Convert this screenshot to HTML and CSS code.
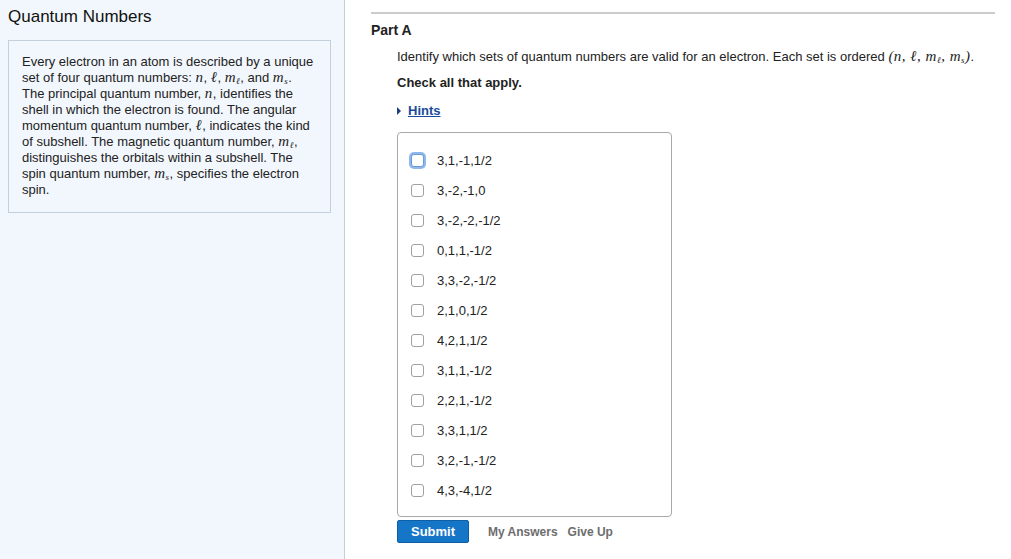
FILE: index.html
```html
<!DOCTYPE html>
<html>
<head>
<meta charset="utf-8">
<link rel="stylesheet" href="styles.css">
</head>
<body>
<div class="page">
  <aside class="side">
    <h1 class="title">Quantum Numbers</h1>
    <div class="intro">
      Every electron in an atom is described by a unique set of four quantum numbers: <span class="m">n</span>, <span class="m">ℓ</span>, <span class="m">m<sub>ℓ</sub></span>, and <span class="m">m<sub class="up">s</sub></span>. The principal quantum number, <span class="m">n</span>, identifies the shell in which the electron is found. The angular momentum quantum number, <span class="m">ℓ</span>, indicates the kind of subshell. The magnetic quantum number, <span class="m">m<sub>ℓ</sub></span>, distinguishes the orbitals within a subshell. The spin quantum number, <span class="m">m<sub class="up">s</sub></span>, specifies the electron spin.
    </div>
  </aside>
  <main class="main">
    <div class="part">
      <h2 class="part-title">Part A</h2>
      <div class="part-body">
        <p class="question">Identify which sets of quantum numbers are valid for an electron. Each set is ordered <span class="m">(n, ℓ, m<sub>ℓ</sub>, m<sub>s</sub>)</span>.</p>
        <p class="apply">Check all that apply.</p>
        <p class="hints"><span class="tri"></span><a href="#" class="hint-link">Hints</a></p>
        <div class="choices">
          <label class="choice"><span class="box focus"></span>3,1,-1,1/2</label>
          <label class="choice"><span class="box"></span>3,-2,-1,0</label>
          <label class="choice"><span class="box"></span>3,-2,-2,-1/2</label>
          <label class="choice"><span class="box"></span>0,1,1,-1/2</label>
          <label class="choice"><span class="box"></span>3,3,-2,-1/2</label>
          <label class="choice"><span class="box"></span>2,1,0,1/2</label>
          <label class="choice"><span class="box"></span>4,2,1,1/2</label>
          <label class="choice"><span class="box"></span>3,1,1,-1/2</label>
          <label class="choice"><span class="box"></span>2,2,1,-1/2</label>
          <label class="choice"><span class="box"></span>3,3,1,1/2</label>
          <label class="choice"><span class="box"></span>3,2,-1,-1/2</label>
          <label class="choice"><span class="box"></span>4,3,-4,1/2</label>
        </div>
        <div class="actions">
          <button class="submit">Submit</button>
          <a href="#" class="action">My Answers</a>
          <a href="#" class="action">Give Up</a>
        </div>
      </div>
    </div>
  </main>
</div>
</body>
</html>
```

FILE: styles.css
```css
html, body {
  margin: 0;
  padding: 0;
  height: 100%;
}
body {
  font-family: "Liberation Sans", Arial, sans-serif;
  font-size: 13px;
  color: #222;
  background: #fff;
}
.page {
  display: flex;
  min-height: 559px;
}
.side {
  width: 345px;
  flex: none;
  box-sizing: border-box;
  background: #f2f7fd;
  border-right: 1px solid #c4cfda;
  padding: 0 13px 0 8px;
}
.title {
  margin: 0;
  padding-top: 7px;
  font-size: 17px;
  font-weight: normal;
  line-height: 19px;
  color: #111;
}
.intro {
  margin-top: 14px;
  border: 1px solid #c2d0dd;
  padding: 13px 14px 14px 13px;
  line-height: 16px;
  color: #222;
}
.m {
  font-family: "Liberation Serif", "Times New Roman", serif;
  font-style: italic;
  font-size: 15px;
  line-height: 1;
  letter-spacing: 0.5px;
}
.m sub {
  font-size: 9px;
  vertical-align: -2px;
  line-height: 1;
}
.main {
  flex: 1;
  padding: 12px 16px 0 26px;
}
.part {
  border-top: 2px solid #cccccc;
}
.part-title {
  margin: 0;
  padding-top: 8px;
  font-size: 14px;
  line-height: 16px;
  font-weight: bold;
  color: #222;
}
.part-body {
  padding-left: 26px;
}
.question {
  margin: 11px 0 0;
  line-height: 16px;
}
.apply {
  margin: 10px 0 0;
  font-weight: bold;
  line-height: 16px;
}
.hints {
  margin: 12px 0 0;
  line-height: 16px;
  display: flex;
  align-items: center;
}
.tri {
  width: 0;
  height: 0;
  border-top: 4px solid transparent;
  border-bottom: 4px solid transparent;
  border-left: 4px solid #1d3f7a;
  margin-right: 7px;
}
.hint-link {
  color: #1a4b99;
  font-weight: bold;
  text-decoration: underline;
}
.choices {
  margin-top: 13px;
  width: 275px;
  box-sizing: border-box;
  border: 1px solid #a9a9a9;
  border-radius: 4px;
  padding: 12px 0 11px 13px;
}
.choice {
  display: flex;
  align-items: center;
  height: 30px;
  color: #222;
}
.box {
  width: 11px;
  height: 11px;
  border: 1px solid #a0a0a0;
  border-radius: 3px;
  background: #fff;
  margin-right: 13px;
  flex: none;
}
.box.focus {
  border-color: #6b9ad4;
  box-shadow: 0 0 0 2px #8fb7ec;
}
.actions {
  margin-top: 3px;
  display: flex;
  align-items: center;
}
.submit {
  width: 72px;
  height: 23px;
  background: #1576c8;
  border: 1px solid #0f5fa6;
  border-radius: 2px;
  color: #fff;
  font-family: "Liberation Sans", Arial, sans-serif;
  font-weight: bold;
  font-size: 13px;
  padding: 0;
  margin-right: 19px;
}
.action {
  font-size: 12px;
  color: #6d6d6d;
  font-weight: bold;
  text-decoration: none;
  margin-right: 10px;
}
```
